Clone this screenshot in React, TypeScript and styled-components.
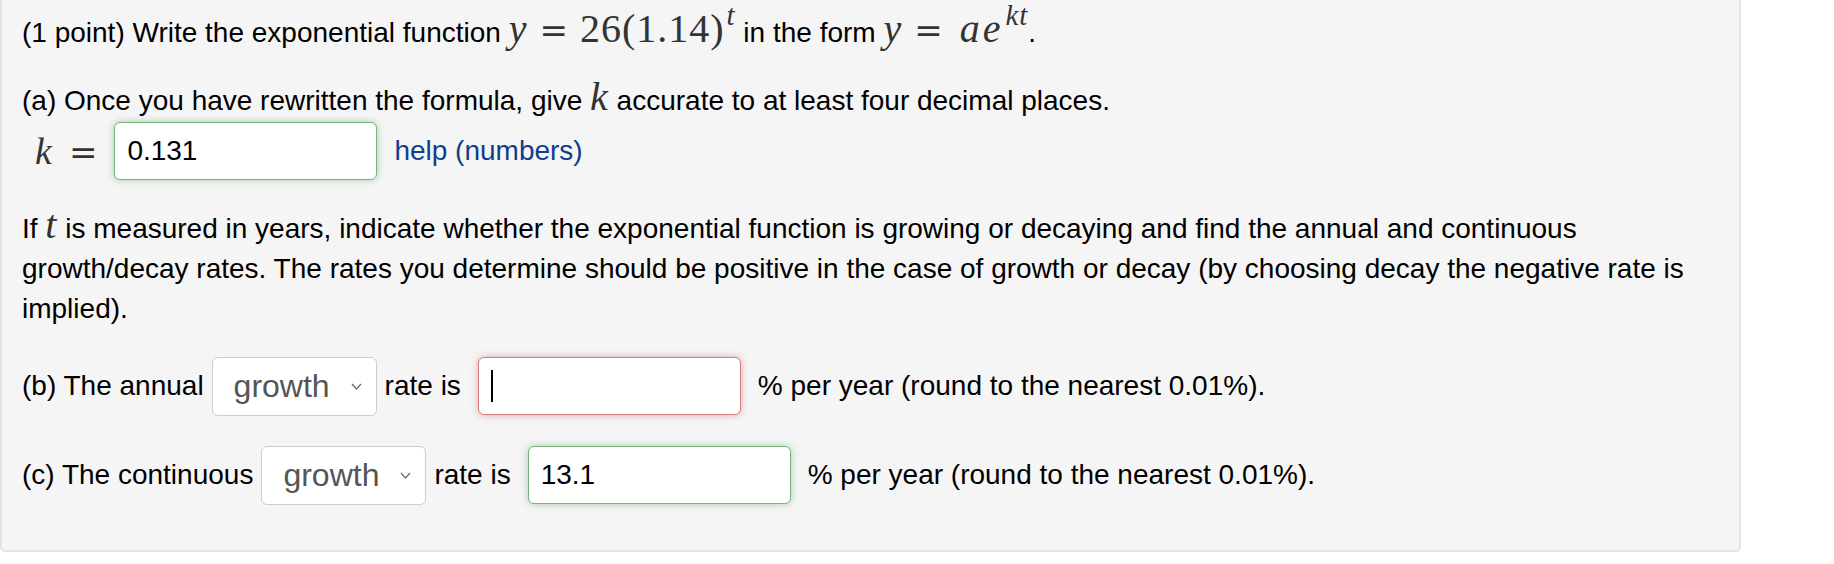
import * as React from "react";
import styled, { createGlobalStyle, css } from "styled-components";

const GlobalStyle = createGlobalStyle`
  html, body {
    margin: 0;
    background: #ffffff;
  }
  body {
    font-family: "Liberation Sans", Arial, Helvetica, sans-serif;
  }
`;

const Well = styled.section`
  box-sizing: border-box;
  width: 1741px;
  background: #f5f5f5;
  border: 2px solid #e4e4e4;
  border-top: none;
  border-radius: 0 0 5px 5px;
  padding: 15px 20px 45px;
  font-size: 28px;
  line-height: 34px;
  color: #000;
`;

const Text = styled.p<{ $top?: number; $lh?: number }>`
  margin: ${(p) => p.$top ?? 0}px 0 0;
  line-height: ${(p) => p.$lh ?? 34}px;
`;

const Math = styled.span`
  font-family: "Liberation Serif", "Times New Roman", serif;
  font-size: 40px;
  line-height: 0;
  letter-spacing: 1px;
  color: #333;
  white-space: nowrap;
`;

const Var = styled.i<{ $wide?: boolean }>`
  font-style: italic;
  letter-spacing: ${(p) => (p.$wide ? 3 : 1)}px;
`;

// TeX's equals sign is wide; DejaVu Serif's is the closest match
const Rel = styled.span<{ $l?: number; $r?: number }>`
  font-family: "DejaVu Serif", "Liberation Serif", serif;
  font-size: 34px;
  letter-spacing: 0;
  margin: 0 ${(p) => p.$r ?? 12}px 0 ${(p) => p.$l ?? 12}px;
`;

const Sup = styled.sup`
  font-size: 0.72em;
  font-style: italic;
  line-height: 0;
  vertical-align: 0.58em;
  margin-left: 2px;
`;

const AnswerRow = styled.div<{ $top: number }>`
  display: flex;
  align-items: center;
  gap: 8px;
  margin-top: ${(p) => p.$top}px;
  white-space: nowrap;
`;

const KLabel = styled(Math)`
  margin-left: 13px;
  font-size: 38px;
  line-height: 1;
  letter-spacing: 0;
`;

const fieldState = {
  correct: css`
    border-color: #79b279;
    box-shadow: 0 0 7px rgba(92, 165, 92, 0.5);
  `,
  incorrect: css`
    border-color: #d27c7c;
    box-shadow: 0 0 7px rgba(210, 90, 90, 0.5);
  `,
};

const FieldWrap = styled.span`
  position: relative;
  display: inline-flex;
  margin: 0 9px;
`;

const Field = styled.input<{ $state: keyof typeof fieldState }>`
  box-sizing: border-box;
  width: 263px;
  height: 58px;
  padding: 0 12px;
  border: 1.5px solid;
  border-radius: 6px;
  background: #fff;
  font-family: "Liberation Sans", Arial, Helvetica, sans-serif;
  font-size: 28px;
  color: #000;
  outline: none;
  ${(p) => fieldState[p.$state]}
`;

const Caret = styled.span`
  position: absolute;
  left: 13px;
  top: 13px;
  width: 2px;
  height: 32px;
  background: #000;
`;

const SelectWrap = styled.span`
  position: relative;
  display: inline-flex;
`;

const Select = styled.select`
  box-sizing: border-box;
  appearance: none;
  width: 165px;
  height: 59px;
  padding: 0 0 0 21px;
  border: 1.5px solid #cdcdcd;
  border-radius: 6px;
  background: #fff;
  font-family: "Liberation Sans", Arial, Helvetica, sans-serif;
  font-size: 32px;
  color: #555;
  outline: none;
`;

const Chevron = styled.svg`
  position: absolute;
  right: 15px;
  top: 50%;
  width: 11px;
  height: 7px;
  margin-top: -3px;
  pointer-events: none;
`;

const HelpLink = styled.a`
  color: #123d8c;
  text-decoration: none;
`;

interface AnswerFieldProps {
  value: string;
  state: keyof typeof fieldState;
  caret?: boolean;
}

const AnswerField = ({ value, state, caret }: AnswerFieldProps) => (
  <FieldWrap>
    <Field $state={state} defaultValue={value} readOnly />
    {caret && <Caret />}
  </FieldWrap>
);

const GrowthSelect = () => (
  <SelectWrap>
    <Select defaultValue="growth">
      <option value="growth">growth</option>
      <option value="decay">decay</option>
    </Select>
    <Chevron viewBox="0 0 11 7">
      <polyline points="1,1 5.5,6 10,1" fill="none" stroke="#6a6a6a" strokeWidth="1.3" />
    </Chevron>
  </SelectWrap>
);

export default function App() {
  return (
    <>
      <GlobalStyle />
      <Well>
        <Text>
          (1 point) Write the exponential function{" "}
          <Math>
            <Var>y</Var>
            <Rel>=</Rel>26(1.14)<Sup>t</Sup>
          </Math>{" "}
          in the form{" "}
          <Math>
            <Var>y</Var>
            <Rel $r={17}>=</Rel>
            <Var $wide>ae</Var>
            <Sup>kt</Sup>
          </Math>
          .
        </Text>
        <Text $top={34}>
          (a) Once you have rewritten the formula, give{" "}
          <Math>
            <Var>k</Var>
          </Math>{" "}
          accurate to at least four decimal places.
        </Text>
        <AnswerRow $top={4}>
          <KLabel>
            <Var>k</Var>
            <Rel $l={16} $r={0}>
              =
            </Rel>
          </KLabel>
          <AnswerField value="0.131" state="correct" />
          <HelpLink href="#">help (numbers)</HelpLink>
        </AnswerRow>
        <Text $top={29} $lh={40}>
          If{" "}
          <Math>
            <Var>t</Var>
          </Math>{" "}
          is measured in years, indicate whether the exponential function is growing or decaying and find the
          annual and continuous growth/decay rates. The rates you determine should be positive in the case of
          growth or decay (by choosing decay the negative rate is implied).
        </Text>
        <AnswerRow $top={28}>
          <span>(b) The annual</span>
          <GrowthSelect />
          <span>rate is</span>
          <AnswerField value="" state="incorrect" caret />
          <span>% per year (round to the nearest 0.01%).</span>
        </AnswerRow>
        <AnswerRow $top={30}>
          <span>(c) The continuous</span>
          <GrowthSelect />
          <span>rate is</span>
          <AnswerField value="13.1" state="correct" />
          <span>% per year (round to the nearest 0.01%).</span>
        </AnswerRow>
      </Well>
    </>
  );
}
